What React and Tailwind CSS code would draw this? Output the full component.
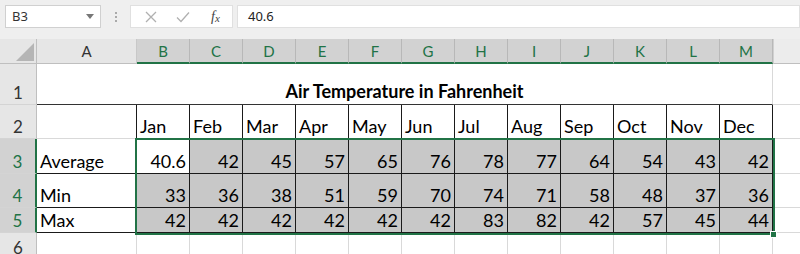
import React from "react";

const months = ["Jan", "Feb", "Mar", "Apr", "May", "Jun", "Jul", "Aug", "Sep", "Oct", "Nov", "Dec"];
const letters = ["B", "C", "D", "E", "F", "G", "H", "I", "J", "K", "L", "M"];
const rows = [
  { n: 3, label: "Average", vals: ["40.6", "42", "45", "57", "65", "76", "78", "77", "64", "54", "43", "42"] },
  { n: 4, label: "Min", vals: ["33", "36", "38", "51", "59", "70", "74", "71", "58", "48", "37", "36"] },
  { n: 5, label: "Max", vals: ["42", "42", "42", "42", "42", "42", "83", "82", "42", "57", "45", "44"] },
];

const cellFont = "font-['Lato',sans-serif] text-[18px] leading-none text-black";

function RowHead({ n, selected }) {
  return (
    <div
      className={
        "flex items-end justify-center pb-[3px] border-b border-b-[#d4d4d4] font-['Lato',sans-serif] text-[17px] leading-none " +
        (selected
          ? "bg-[#d2d2d2] text-[#217346] border-r-2 border-r-[#217346]"
          : "bg-[#e6e6e6] text-[#333] border-r border-r-[#bfbfbf]")
      }
    >
      {n}
    </div>
  );
}

function XIcon() {
  return (
    <svg width="12" height="12" viewBox="0 0 12 12">
      <path d="M1 1 L11 11 M11 1 L1 11" stroke="#b0b0b0" strokeWidth="1.3" fill="none" />
    </svg>
  );
}

function CheckIcon() {
  return (
    <svg width="14" height="12" viewBox="0 0 14 12">
      <path d="M1 6.5 L5 10.5 L13 1.5" stroke="#b0b0b0" strokeWidth="1.3" fill="none" />
    </svg>
  );
}

export default function App() {
  return (
    <div className="w-[800px] h-[254px] overflow-hidden bg-white">
      {/* Formula bar */}
      <div className="h-[39px] bg-[#efefef] flex items-start pt-[5px] pl-[5px]">
        <div className="w-[96px] h-[23px] bg-white border border-[#d0d0d0] flex items-center justify-between pl-[6px] pr-[6px]">
          <span className="font-['Noto_Sans',sans-serif] text-[13px] text-[#333]">B3</span>
          <svg width="8" height="5" viewBox="0 0 8 5">
            <path d="M0 0 L8 0 L4 5 Z" fill="#777" />
          </svg>
        </div>
        <div className="w-[29px] h-[23px] flex flex-col items-center justify-center gap-[2px]">
          <div className="w-[2px] h-[2px] bg-[#aaa]" />
          <div className="w-[2px] h-[2px] bg-[#aaa]" />
          <div className="w-[2px] h-[2px] bg-[#aaa]" />
        </div>
        <div className="w-[103px] h-[23px] bg-white border border-[#e0e0e0] flex items-center">
          <div className="w-[35px] flex justify-center pl-[4px]">
            <XIcon />
          </div>
          <div className="w-[33px] flex justify-center">
            <CheckIcon />
          </div>
          <div className="flex-1 flex justify-center items-center font-['Liberation_Serif',serif] italic text-[14px] text-[#444]">
            f<span className="text-[11px] mt-[3px]">x</span>
          </div>
        </div>
        <div className="ml-[4px] flex-1 h-[23px] bg-white border border-[#e0e0e0] flex items-center pl-[10px]">
          <span className="font-['Noto_Sans',sans-serif] text-[13px] text-[#222]">40.6</span>
        </div>
      </div>

      {/* Sheet grid */}
      <div className="relative grid grid-cols-[37px_100px_repeat(12,53px)_1fr] grid-rows-[25px_41px_34px_35px_34px_25px_27px]">
        {/* Column header row */}
        <div className="relative bg-[#e6e6e6] border-r border-r-[#bfbfbf] border-b border-b-[#bfbfbf]">
          <svg className="absolute left-[16px] top-[4px]" width="18" height="18" viewBox="0 0 18 18">
            <path d="M18 0 L18 18 L0 18 Z" fill="#b5b5b5" />
          </svg>
        </div>
        <div className="bg-[#e6e6e6] border-r border-r-[#c8c8c8] border-b border-b-[#bfbfbf] flex items-center justify-center font-['Lato',sans-serif] text-[15px] text-[#333]">
          A
        </div>
        {letters.map((l) => (
          <div
            key={l}
            className="bg-[#d2d2d2] border-r border-r-[#b8b8b8] border-b-2 border-b-[#217346] flex items-center justify-center pt-[1px] font-['Lato',sans-serif] text-[15px] text-[#217346]"
          >
            {l}
          </div>
        ))}
        <div className="bg-[#ececec] border-b border-b-[#bfbfbf] border-l border-l-[#d0d0d0]" />

        {/* Row 1 */}
        <RowHead n={1} />
        <div className="col-span-13 flex items-end justify-center pb-[4px] border-b border-b-[#333] border-r border-r-[#d9d9d9] font-['Lato',sans-serif] text-[18px] leading-none font-bold text-black">
          Air Temperature in Fahrenheit
        </div>
        <div className="border-b border-b-[#d9d9d9]" />

        {/* Row 2 */}
        <RowHead n={2} />
        <div className="border-r border-r-[#1a1a1a] border-b border-b-[#d9d9d9]" />
        {months.map((m) => (
          <div
            key={m}
            className={"flex items-end pl-[3px] pb-[3px] border-r border-r-[#1a1a1a] border-b border-b-[#1a1a1a] " + cellFont}
          >
            {m}
          </div>
        ))}
        <div className="border-b border-b-[#d9d9d9]" />

        {/* Rows 3-5 */}
        {rows.map((r) => (
          <React.Fragment key={r.n}>
            <RowHead n={r.n} selected />
            <div className={"bg-white flex items-end pl-[3px] pb-[3px] border-r border-r-[#1a1a1a] border-b border-b-[#1a1a1a] " + cellFont}>
              {r.label}
            </div>
            {r.vals.map((v, i) => (
              <div
                key={i}
                className={
                  "flex items-end justify-end pr-[3px] pb-[3px] border-r border-r-[#1a1a1a] border-b border-b-[#1a1a1a] " +
                  (r.n === 3 && i === 0 ? "bg-white " : "bg-[#c8c8c8] ") +
                  cellFont
                }
              >
                {v}
              </div>
            ))}
            <div className="border-b border-b-[#d9d9d9]" />
          </React.Fragment>
        ))}

        {/* Row 6 (partially visible) */}
        <RowHead n={6} />
        <div className="border-r border-r-[#d9d9d9]" />
        {letters.map((l) => (
          <div key={l} className="border-r border-r-[#d9d9d9]" />
        ))}
        <div />

        {/* Selection outline */}
        <div className="absolute left-[135px] top-[99px] w-[640px] h-[97px] border-2 border-[#217346] pointer-events-none" />
        <div className="absolute left-[770px] top-[192px] w-[7px] h-[7px] bg-[#217346] border border-white pointer-events-none" />
      </div>
    </div>
  );
}
